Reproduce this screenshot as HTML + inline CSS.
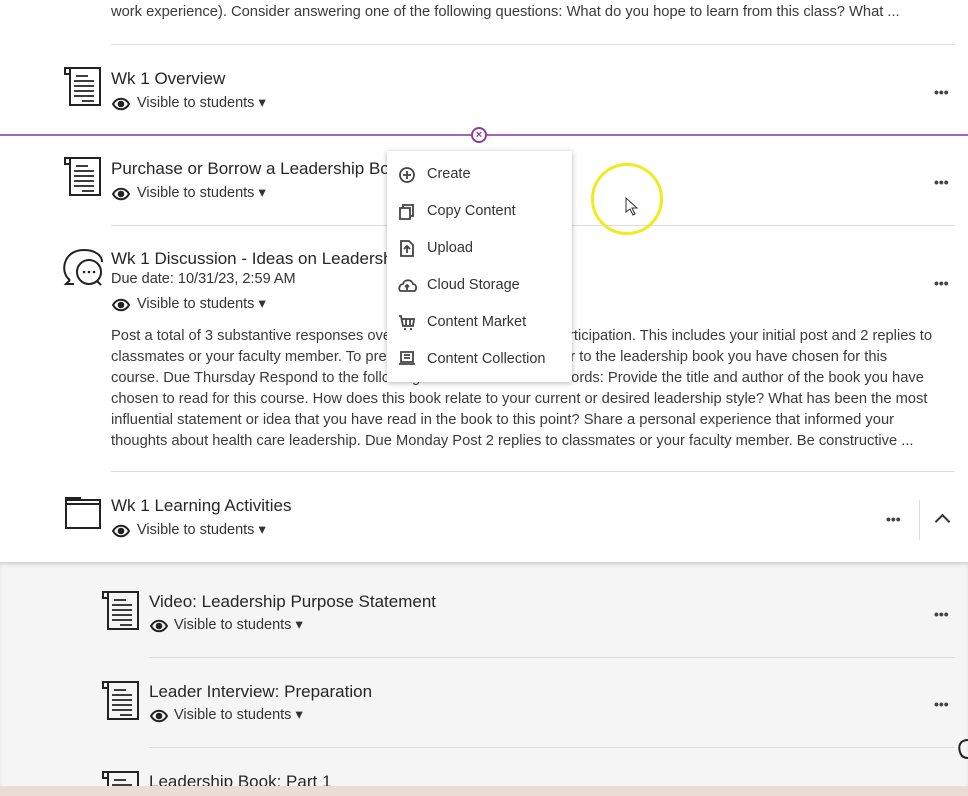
<!DOCTYPE html>
<html><head><meta charset="utf-8"><style>
*{margin:0;padding:0;box-sizing:border-box}
body{width:968px;height:796px;overflow:hidden;position:relative;background:#fff;font-family:"Liberation Sans",sans-serif;color:#262626}
.a{position:absolute;white-space:nowrap}
.t{font-size:17px;font-weight:500}
.v{font-size:14.5px;color:#333}
.p{font-size:14.7px;color:#3a3a3a}
.sep{position:absolute;height:1px;background:#dcdcdc}
.dots{position:absolute;font-size:14px;font-weight:bold;letter-spacing:0px;color:#444}
.mi{position:absolute;left:427px;font-size:14.5px;color:#333}
</style></head><body>
<div class="a p" style="left:111px;top:4px">work experience). Consider answering one of the following questions: What do you hope to learn from this class? What ...</div>
<div class="sep" style="left:111px;top:44px;width:844px"></div>

<svg style="position:absolute;left:0;top:0" width="968" height="796">
<defs>
<g id="doc" fill="none" stroke="#222" stroke-width="2">
<path d="M6 1h30v37H6z"/><path d="M1 1h5v6H1z"/><path d="M12 9h12M10 14h20M10 19h20M10 24h20M10 29h20M18 34h12" stroke-width="1.8"/>
</g>
<g id="eye" fill="none" stroke="#222" stroke-width="2"><path d="M1 7c4-7 12-7 16 0c-4 7-12 7-16 0z"/><circle cx="9" cy="7" r="2.3" fill="#222"/></g>
</defs>
<use href="#doc" x="64" y="67"/>
<use href="#doc" x="64" y="157"/>
<use href="#eye" x="112" y="97"/>
<use href="#eye" x="112" y="187"/>
<use href="#eye" x="112" y="298"/>
<g fill="none" stroke="#222" stroke-width="2">
<path d="M70 280c-10-6-8-30 14-30c12 0 18 6 18 12"/><path d="M70 280l-4 4h8"/>
<circle cx="89" cy="272" r="12"/><path d="M97 281l4 4"/>
</g>
<circle cx="84" cy="272" r="1.3" fill="#222"/><circle cx="89" cy="272" r="1.3" fill="#222"/><circle cx="94" cy="272" r="1.3" fill="#222"/>
<path d="M66 500h34v28H66zM66 504h34M66 500v-2h14v2" fill="none" stroke="#222" stroke-width="2"/>
<use href="#eye" x="112" y="524"/>
</svg>

<div class="a t" style="left:111px;top:69px">Wk 1 Overview</div>
<div class="a v" style="left:137px;top:95px">Visible to students ▾</div>
<div class="dots" style="left:934px;top:84px">•••</div>

<div style="position:absolute;left:0;top:134px;width:968px;height:2px;background:#a466b4"></div>
<div style="position:absolute;left:471px;top:127px;width:16px;height:16px;border-radius:50%;border:2px solid #8a3f9e;background:#fff;color:#8a3f9e;font-size:11px;font-weight:bold;text-align:center;line-height:12px">×</div>

<div class="a t" style="left:111px;top:159px">Purchase or Borrow a Leadership Book</div>
<div class="a v" style="left:137px;top:185px">Visible to students ▾</div>
<div class="dots" style="left:934px;top:174px">•••</div>
<div class="sep" style="left:111px;top:225px;width:844px"></div>

<div class="a t" style="left:111px;top:249px">Wk 1 Discussion - Ideas on Leadership</div>
<div class="a" style="left:111px;top:271px;font-size:14.5px;color:#333">Due date: 10/31/23, 2:59 AM</div>
<div class="a v" style="left:137px;top:296px">Visible to students ▾</div>
<div class="dots" style="left:934px;top:275px">•••</div>
<div class="a p" style="left:111px;top:326px;line-height:21px">Post a total of 3 substantive responses over 2 separate days for full participation. This includes your initial post and 2 replies to<br>classmates or your faculty member. To prepare for this discussion, refer to the leadership book you have chosen for this<br>course. Due Thursday Respond to the following in a minimum of 175 words: Provide the title and author of the book you have<br>chosen to read for this course. How does this book relate to your current or desired leadership style? What has been the most<br>influential statement or idea that you have read in the book to this point? Share a personal experience that informed your<br>thoughts about health care leadership. Due Monday Post 2 replies to classmates or your faculty member. Be constructive ...</div>
<div class="sep" style="left:111px;top:471px;width:844px"></div>

<div class="a t" style="left:111px;top:496px">Wk 1 Learning Activities</div>
<div class="a v" style="left:137px;top:522px">Visible to students ▾</div>
<div class="dots" style="left:886px;top:511px">•••</div>
<div style="position:absolute;left:919px;top:500px;width:1px;height:40px;background:#ddd"></div>
<div style="position:absolute;left:937px;top:516px;width:11px;height:11px;border-left:2px solid #333;border-top:2px solid #333;transform:rotate(45deg)"></div>

<div style="position:absolute;left:0;top:562px;width:968px;height:234px;background:#f5f5f5;box-shadow:inset 0 4px 4px -2px #ccc"></div>
<svg style="position:absolute;left:0;top:0" width="968" height="796">
<use href="#doc" x="102" y="591"/>
<use href="#doc" x="102" y="681"/>
<use href="#doc" x="102" y="771"/>
<use href="#eye" x="150" y="619"/>
<use href="#eye" x="150" y="709"/>
<path d="M968 740c-8 0-10 6-8 12c1 4 4 6 8 6" fill="none" stroke="#222" stroke-width="2"/>
</svg>
<div class="a t" style="left:149px;top:592px">Video: Leadership Purpose Statement</div>
<div class="a v" style="left:174px;top:617px">Visible to students ▾</div>
<div class="dots" style="left:934px;top:606px">•••</div>
<div class="sep" style="left:149px;top:657px;width:806px"></div>
<div class="a t" style="left:149px;top:682px">Leader Interview: Preparation</div>
<div class="a v" style="left:174px;top:707px">Visible to students ▾</div>
<div class="dots" style="left:934px;top:696px">•••</div>
<div class="sep" style="left:149px;top:747px;width:806px"></div>
<div class="a t" style="left:149px;top:772px">Leadership Book: Part 1</div>
<div style="position:absolute;left:0;top:786px;width:968px;height:10px;background:#ecdcd6"></div>

<div style="position:absolute;left:387px;top:151px;width:185px;height:231px;background:#fff;box-shadow:0 1px 5px rgba(0,0,0,.3)"></div>
<svg style="position:absolute;left:0;top:0" width="968" height="796" fill="none" stroke="#444" stroke-width="1.8">
<circle cx="407" cy="175" r="7"/><path d="M407 171v8M403 175h8"/>
<path d="M400 208h10v11h-10zM403 208v-3h10v11h-3"/>
<path d="M401 241h8l4 4v11h-12zM407 253v-7M404 249l3-3l3 3"/>
<path d="M401 291h13c3 0 3-7-1-7c-1-5-9-5-10 0c-4 0-5 7-2 7zM407 290v-5M405 287l2-2l2 2"/>
<path d="M399 316h2l2 10h10l1-7h-12M404 329h2M410 329h2M406 319v6M410 319v6"/>
<path d="M401 352h12v10h-12zM399 364h16M404 355h6M404 358h6"/>
</svg>
<div class="mi" style="top:166px">Create</div>
<div class="mi" style="top:203px">Copy Content</div>
<div class="mi" style="top:240px">Upload</div>
<div class="mi" style="top:277px">Cloud Storage</div>
<div class="mi" style="top:314px">Content Market</div>
<div class="mi" style="top:351px">Content Collection</div>

<div style="position:absolute;left:591px;top:163px;width:72px;height:72px;border-radius:50%;border:3px solid #f0ea1e"></div>
<svg style="position:absolute;left:624px;top:197px" width="14" height="20"><path d="M2 1v14l4-3l3 6l2-1l-3-6h5z" fill="#fff" stroke="#333" stroke-width="1"/></svg>
</body></html>
